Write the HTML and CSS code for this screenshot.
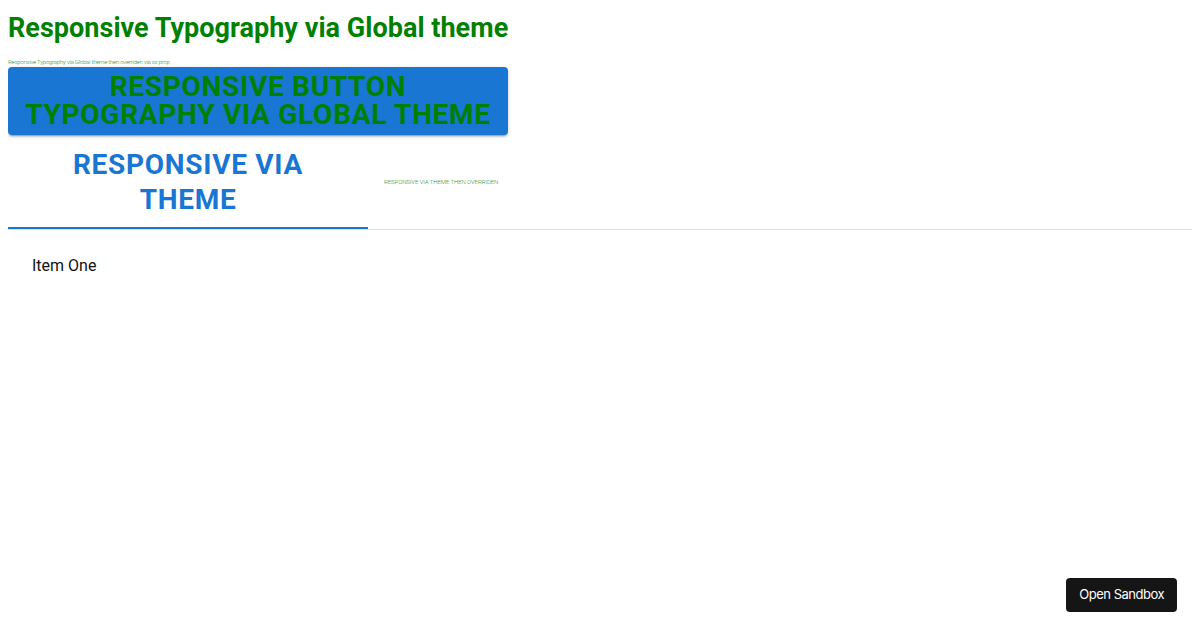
FILE: index.html
```html
<!DOCTYPE html>
<html lang="en">
<head>
  <meta charset="UTF-8" />
  <meta name="viewport" content="width=device-width, initial-scale=1.0"/>
  <title>Responsive Typography</title>
  <link rel="stylesheet" href="styles.css">
</head>
<body>
  <div class="heading-box">
    <h1 class="heading">Responsive Typography via Global theme</h1>
    <p class="tiny-text">Responsive Typography via Global theme then overriden via sx prop</p>
    <button class="big-button">Responsive Button Typography via Global Theme</button>
  </div>

  <div class="tabs">
    <div class="tab tab-active">Responsive via Theme</div>
    <div class="tab tab-tiny">Responsive via Theme then overriden</div>
  </div>
  <div class="tab-panel">Item One</div>

  <a class="sandbox-link" href="#">Open Sandbox</a>
</body>
</html>
```

FILE: styles.css
```css
body {
  margin: 8px;
  background-color: #fff;
  font-family: Roboto, "Liberation Sans", sans-serif;
  color: rgba(0, 0, 0, 0.87);
}
.heading-box {
  width: 500px;
}
.heading {
  margin: 0;
  padding-top: 3px;
  font-size: 27px;
  font-weight: 700;
  line-height: 34px;
  letter-spacing: 0.03px;
  color: green;
  white-space: nowrap;
}
.tiny-text {
  margin: 0;
  padding-top: 11px;
  font-size: 6px;
  font-weight: 300;
  line-height: 11px;
  letter-spacing: -0.23px;
  color: #2f8f2f;
}
.big-button {
  display: block;
  width: 500px;
  height: 68px;
  padding: 6px 16px;
  border: 0;
  border-radius: 4px;
  background-color: #1976d2;
  box-shadow: 0 3px 1px -2px rgba(0, 0, 0, 0.2), 0 2px 2px 0 rgba(0, 0, 0, 0.14), 0 1px 5px 0 rgba(0, 0, 0, 0.12);
  font-family: inherit;
  font-size: 28px;
  font-weight: 700;
  line-height: 28px;
  letter-spacing: 0.72px;
  text-transform: uppercase;
  color: green;
}
.tabs {
  display: flex;
  align-items: stretch;
  height: 94px;
  border-bottom: 1px solid #e0e0e0;
}
.tab {
  display: flex;
  align-items: center;
  justify-content: center;
  box-sizing: border-box;
  padding: 12px 16px;
  text-align: center;
  text-transform: uppercase;
}
.tab-active {
  width: 360px;
  padding-left: 50px;
  padding-right: 50px;
  box-shadow: inset 0 -2px 0 #1976d2;
  font-size: 28px;
  font-weight: 700;
  line-height: 35px;
  letter-spacing: 0.72px;
  color: #1976d2;
}
.tab-tiny {
  font-size: 6px;
  font-weight: 300;
  line-height: 10px;
  letter-spacing: -0.08px;
  color: #2f8f2f;
  white-space: nowrap;
}
.tab-panel {
  padding: 24px;
  font-size: 16px;
  line-height: 24px;
  color: #111;
}
.sandbox-link {
  position: fixed;
  right: 23px;
  bottom: 18px;
  padding: 0 13px;
  height: 34px;
  line-height: 33px;
  border-radius: 4px;
  background-color: #151515;
  font-family: Inter, sans-serif;
  font-size: 13px;
  letter-spacing: -0.5px;
  color: #fff;
  text-decoration: none;
}
```
